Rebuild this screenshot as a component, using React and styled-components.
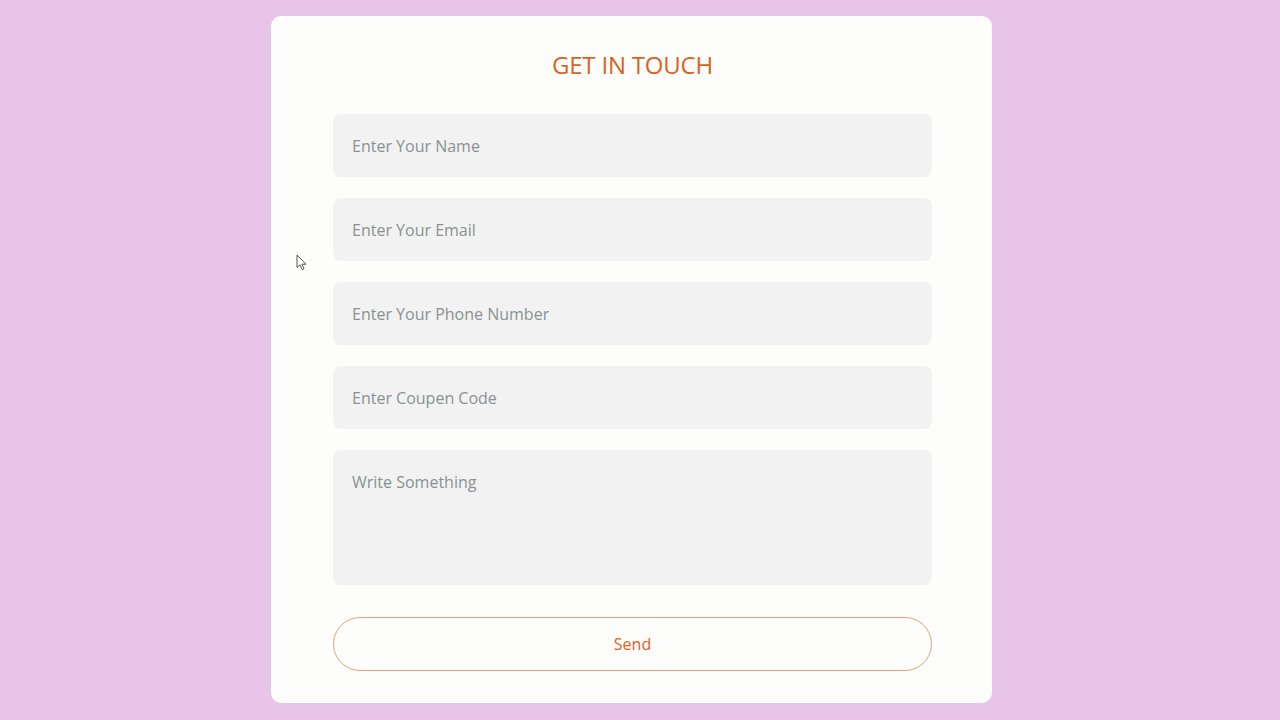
import React from "react";
import styled, { createGlobalStyle } from "styled-components";

const GlobalStyle = createGlobalStyle`
  html, body {
    margin: 0;
    padding: 0;
    background: #e8c4e8;
  }
  body {
    font-family: "Open Sans", "Liberation Sans", sans-serif;
  }
`;

const Page = styled.div`
  position: relative;
  width: 1280px;
  height: 720px;
  padding-top: 16px;
  box-sizing: border-box;
`;

const Card = styled.form`
  width: 721px;
  margin-left: 271px;
  box-sizing: border-box;
  padding: 31px 60px 32px 62px;
  background: #fdfdfc;
  border-radius: 10px;
  display: flex;
  flex-direction: column;
  align-items: stretch;

  .title {
    margin: 0 0 31px 0;
    text-align: center;
    font-size: 24px;
    line-height: 36px;
    font-weight: 400;
    color: #d9631f;
    letter-spacing: -0.2px;
  }
`;

const Fields = styled.div`
  display: flex;
  flex-direction: column;
  gap: 21px;
`;

const Field = styled.input`
  width: 100%;
  height: ${(props) => (props.tall ? "135px" : "63px")};
  box-sizing: border-box;
  border: none;
  outline: none;
  border-radius: 8px;
  background: #f2f2f2;
  padding: 0 19px;
  font-family: inherit;
  font-size: 16px;
  color: #333;
  &::placeholder {
    color: #8a9192;
  }
`;

const Message = styled.textarea`
  width: 100%;
  height: 135px;
  box-sizing: border-box;
  border: none;
  outline: none;
  resize: none;
  border-radius: 8px;
  background: #f2f2f2;
  padding: 21px 19px;
  font-family: inherit;
  font-size: 16px;
  line-height: 22px;
  color: #333;
  &::placeholder {
    color: #8a9192;
  }
`;

const SendButton = styled.button`
  margin-top: 32px;
  width: 100%;
  height: 54px;
  border: 1px solid #e3a27c;
  border-radius: 27px;
  background: transparent;
  color: #d9631f;
  font-family: inherit;
  font-size: 16px;
  font-weight: 500;
  cursor: pointer;
`;

const Cursor = styled.svg`
  position: absolute;
  left: 296px;
  top: 254px;
  width: 12px;
  height: 18px;
`;

const fields = [
  "Enter Your Name",
  "Enter Your Email",
  "Enter Your Phone Number",
  "Enter Coupen Code",
];

export default function App() {
  return (
    <Page>
      <GlobalStyle />
      <Card onSubmit={(e) => e.preventDefault()}>
        <h2 className="title">GET IN TOUCH</h2>
        <Fields>
          {fields.map((text) => (
            <Field key={text} placeholder={text} />
          ))}
          <Message placeholder="Write Something" />
        </Fields>
        <SendButton type="submit">Send</SendButton>
      </Card>
      <Cursor viewBox="0 0 12 18">
        <path
          d="M1 1 L1 13.5 L4 10.8 L6.2 15.6 L8 14.8 L5.9 10.2 L10 10.2 Z"
          fill="#fff"
          stroke="#555"
          strokeWidth="1"
          strokeLinejoin="round"
        />
      </Cursor>
    </Page>
  );
}
